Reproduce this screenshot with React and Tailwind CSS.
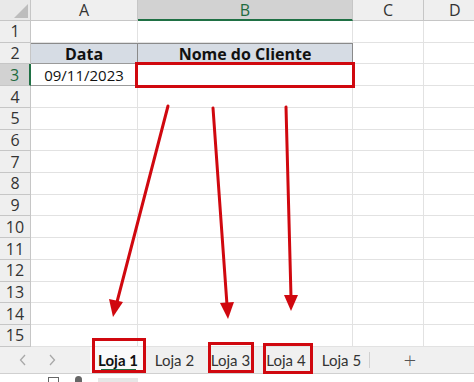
import React from "react";

const ROWS = Array.from({ length: 15 }, (_, i) => i + 1);

function Cell({ children, className = "" }) {
  return (
    <div className={`border-r border-b border-[#e2e2e2] flex items-center justify-center overflow-hidden ${className}`}>
      {children}
    </div>
  );
}

function Chevron({ dir }) {
  return (
    <svg width="8" height="12" viewBox="0 0 8 12" fill="none" stroke="#a8a8a8" strokeWidth="1.3">
      {dir === "left" ? <polyline points="6,1 1.5,6 6,11" /> : <polyline points="2,1 6.5,6 2,11" />}
    </svg>
  );
}

export default function App() {
  return (
    <div className="relative w-[474px] h-[382px] overflow-hidden bg-white text-[#222]" style={{ fontFamily: '"Open Sans", "Liberation Sans", sans-serif' }}>
      <div className="grid grid-cols-[31px_107px_215px_71px_1fr] grid-rows-[21px_repeat(15,21.73px)]">
        {/* header row */}
        <div className="relative bg-[#e9e9e9] border-r border-b border-[#c6c6c6]">
          <div className="absolute right-[2px] bottom-[2px] w-0 h-0 border-l-[14px] border-l-transparent border-b-[14px] border-b-[#bdbdbd]" />
        </div>
        <div className="bg-[#efefef] border-r border-b border-[#c6c6c6] flex items-center justify-center text-[16px] text-[#333]">A</div>
        <div className="bg-[#d2d2d2] border-r border-b-2 border-r-[#c6c6c6] border-b-[#1f7044] flex items-center justify-center text-[16px] text-[#1f6b3f]">B</div>
        <div className="bg-[#efefef] border-r border-b border-[#c6c6c6] flex items-center justify-center text-[16px] text-[#333]">C</div>
        <div className="bg-[#efefef] border-b border-[#c6c6c6] flex items-center justify-start pl-[25px] text-[16px] text-[#333]">D</div>

        {ROWS.map((r) => (
          <React.Fragment key={r}>
            <div className={`border-r border-b flex items-center justify-center text-[16px] ${r === 3 ? "bg-[#d2d2d2] text-[#1f6b3f] border-r-[#1f7044] border-r-2 border-b-[#c6c6c6]" : "bg-[#efefef] text-[#333] border-[#c6c6c6]"}`}>{r}</div>
            {r === 2 ? (
              <>
                <div className="bg-[#d6dce4] border-t border-t-[#8a8a8a] border-r border-r-[#8a8a8a] border-b border-b-[#9a9a9a] flex items-center justify-center font-bold text-[16px] text-[#111]">Data</div>
                <div className="bg-[#d6dce4] border-t border-t-[#8a8a8a] border-r border-r-[#8a8a8a] border-b border-b-[#9a9a9a] flex items-center justify-center font-bold text-[16px] text-[#111]">Nome do Cliente</div>
              </>
            ) : r === 3 ? (
              <>
                <Cell className="border-r-[#9a9a9a] border-b-[#9a9a9a] text-[15px] text-[#111]">09/11/2023</Cell>
                <Cell />
              </>
            ) : (
              <>
                <Cell />
                <Cell />
              </>
            )}
            <Cell />
            <div className="border-b border-[#e2e2e2]" />
          </React.Fragment>
        ))}
      </div>

      {/* sheet tab bar */}
      <div className="flex items-center h-[27px] bg-[#f0f0f0] border-b border-[#d0d0d0] text-[15px] text-[#333]" style={{ fontFamily: 'Lato, "Liberation Sans", sans-serif' }}>
        <div className="flex items-center w-[90px] pl-[19px] gap-[21px]">
          <Chevron dir="left" />
          <Chevron dir="right" />
        </div>
        <div className="relative w-[56px] h-full flex items-center justify-center font-bold text-[#111] bg-[#fafafa]">
          Loja 1
          <div className="absolute bottom-[2px] left-[11px] right-[10px] h-[2px] bg-[#1f7044]" />
        </div>
        <div className="w-[57px] flex items-center justify-center">Loja 2</div>
        <div className="w-[55px] flex items-center justify-center">Loja 3</div>
        <div className="w-[56px] flex items-center justify-center">Loja 4</div>
        <div className="w-[55px] flex items-center justify-center">Loja 5</div>
        <div className="w-px h-[16px] bg-[#d0d0d0]" />
        <div className="w-[80px] flex items-center justify-center text-[22px] font-light text-[#555]">+</div>
      </div>
      {/* status bar sliver */}
      <div className="h-[8px] bg-white relative">
        <div className="absolute left-[48px] top-[3px] w-[11px] h-[5px] border border-[#666] border-b-0" />
        <div className="absolute left-[75px] top-[2px] w-[7px] h-[6px] bg-[#666] rounded-t-full" />
        <div className="absolute left-[98px] top-[4px] w-[40px] h-[4px] bg-[#e6e6e6]" />
      </div>

      {/* annotations */}
      <div className="absolute left-[135px] top-[62px] w-[220px] h-[26px] border-[3px] border-[#d0080f]" />
      <div className="absolute left-[92px] top-[338px] w-[54px] h-[35px] border-[3px] border-[#d0080f]" />
      <div className="absolute left-[208px] top-[342px] w-[46px] h-[31px] border-[3px] border-[#d0080f]" />
      <div className="absolute left-[263px] top-[343px] w-[50px] h-[31px] border-[3px] border-[#d0080f]" />

      <svg className="absolute inset-0" width="474" height="382" viewBox="0 0 474 382">
        <g stroke="#d0080f" strokeWidth="3" strokeLinecap="round" fill="none">
          <line x1="168" y1="106" x2="117" y2="302" />
          <line x1="213" y1="108" x2="227" y2="305" />
          <line x1="286" y1="107" x2="291" y2="297" />
        </g>
        <g fill="#d0080f">
          <polygon points="113,317 109,299 123,302" />
          <polygon points="228,319 220,303 234,302" />
          <polygon points="291,311 284,295 298,295" />
        </g>
      </svg>
    </div>
  );
}
